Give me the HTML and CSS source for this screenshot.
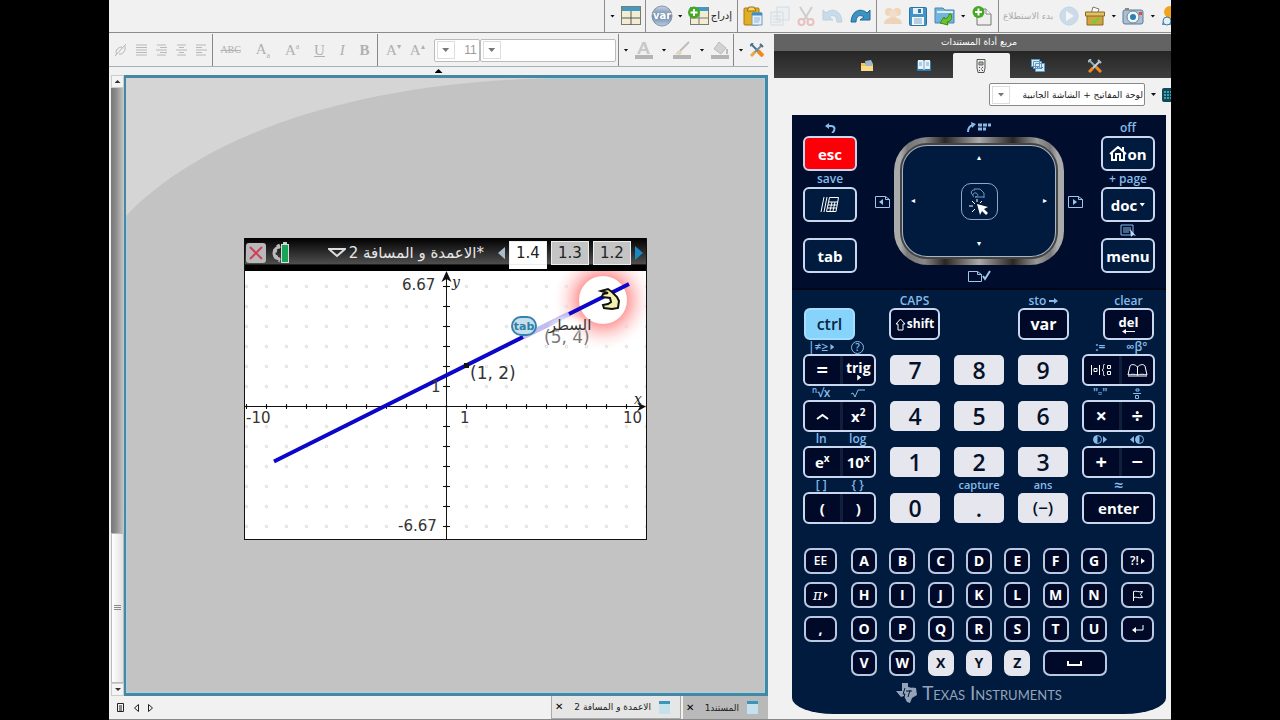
FILE: index.html
```html
<!DOCTYPE html>
<html lang="ar">
<head>
<meta charset="utf-8">
<title>TI-Nspire</title>
<link rel="stylesheet" href="styles.css">
</head>
<body>
<div class="window">
  <header class="topbar">
    <div class="group g-view">
      <button class="tool" aria-label="تخطيط"><i class="caret"></i>
        <svg width="20" height="20" viewBox="0 0 20 20"><rect x=".5" y=".5" width="19" height="18" fill="#f3ecd2" stroke="#7b7b6c"/><rect x="1" y="1" width="18" height="4" fill="#3e9bc4"/><path d="M10 5v14M1 12h18" stroke="#4f5a5c"/></svg></button>
    </div>
    <div class="group g-insert">
      <button class="tool" aria-label="متغير">
        <svg width="22" height="22" viewBox="0 0 22 22"><defs><linearGradient id="vg" x2="0" y2="1"><stop stop-color="#c4d4e4"/><stop offset=".5" stop-color="#6b88a8"/><stop offset="1" stop-color="#b8cfe4"/></linearGradient></defs><circle cx="11" cy="11" r="10" fill="url(#vg)" stroke="#8795a5"/><text x="11" y="14" class="ico-var">var</text></svg></button>
      <button class="tool" dir="rtl"><span>إدراج</span>
        <svg width="21" height="20" viewBox="0 0 21 20"><rect x="2.500" y="1.500" width="18" height="17" fill="#f3ecd2" stroke="#7b7b6c"/><rect x="3" y="1" width="17" height="4" fill="#3e9bc4"/><path d="M11 5v14M3 12h17" stroke="#777"/><circle cx="6" cy="6.500" r="6" fill="#43a824"/><path d="M6 3v7M2.500 6.500h7" stroke="#fff" stroke-width="2"/></svg><i class="caret"></i></button>
    </div>
    <div class="group g-edit">
      <button class="tool" aria-label="لصق"><svg width="20" height="20" viewBox="0 0 20 20"><rect x="1" y="2" width="15" height="17" rx="1" fill="#e2ae22" stroke="#a87810"/><path d="M4 5l2-4h5l2 4z" fill="#f7d76a" stroke="#9a7012"/><path d="M9 7h10v12H9z" fill="#e7f0fa" stroke="#6d9cc4"/><path d="M9 8h10" stroke="#418fc4" stroke-width="3"/><path d="M11 12h6M11 14h6M11 16h5" stroke="#8cb4d6"/></svg></button>
      <button class="tool off" aria-label="نسخ"><svg width="20" height="20" viewBox="0 0 20 20"><path d="M7 1h12v13H7zM1 6h12v13H1z" fill="#e8eff5" stroke="#9ab4c8"/><path d="M3 10h8M3 13h8M3 16h8" stroke="#9ab4c8"/></svg></button>
      <button class="tool off" aria-label="قص"><svg width="18" height="20" viewBox="0 0 18 20"><path d="M3 1l8 13M15 1L7 14" stroke="#8d8d8d" stroke-width="2"/><circle cx="4.500" cy="16" r="3" fill="none" stroke="#d66" stroke-width="2"/><circle cx="13.500" cy="16" r="3" fill="none" stroke="#d66" stroke-width="2"/></svg></button>
      <button class="tool off" aria-label="تراجع"><svg width="21" height="16" viewBox="0 0 21 16"><path d="M1 2l3 3c5-5 15-4 16 9h-5c0-6-4-8-8-5l4 3H1z" fill="#7eb4d8" stroke="#5a92ba"/></svg></button>
      <button class="tool" aria-label="إعادة"><svg width="21" height="16" viewBox="0 0 21 16"><path d="M20 2l-3 3C12 0 2 1 1 14h5c0-6 4-8 8-5l-4 3h10z" fill="#3b93c4" stroke="#226a94"/></svg></button>
    </div>
    <div class="group g-file">
      <button class="tool off" aria-label="الصف"><svg width="20" height="20" viewBox="0 0 20 20"><circle cx="6" cy="6" r="4" fill="#e7a65a"/><circle cx="14" cy="6" r="4" fill="#e7a65a"/><circle cx="10" cy="8" r="4" fill="#f0bd7d"/><path d="M1 18c0-9 18-9 18 0z" fill="#e8a052"/></svg></button>
      <button class="tool" aria-label="حفظ"><svg width="18" height="19" viewBox="0 0 18 19"><rect x=".5" y=".5" width="17" height="18" rx="1" fill="#4294c8" stroke="#2c73a4"/><path d="M4 1h10v6H4z" fill="#e4f0f8"/><path d="M9 2h3v4H9z" fill="#3376a6"/><path d="M3 10h12v8H3z" fill="#f4f8fb"/><path d="M5 12h8M5 14h8M5 16h8" stroke="#7ba7c8"/></svg></button>
      <button class="tool" aria-label="فتح"><svg width="21" height="20" viewBox="0 0 21 20"><path d="M1 2h8l2 2h9v13H1z" fill="#72b4dc" stroke="#4687b0"/><path d="M3 6h16" stroke="#d8edf8" stroke-width="2"/><path d="M17 8c2 5-1 8-4 8l1 3-8-2 4-6 1 2c3-1 4-3 4-5z" fill="#69c52c" stroke="#3c8a16"/></svg><i class="caret"></i></button>
      <button class="tool" aria-label="جديد"><svg width="20" height="20" viewBox="0 0 20 20"><path d="M5 3h9l5 5v11H5z" fill="#eee" stroke="#777"/><path d="M14 3v5h5" fill="#fff" stroke="#888"/><circle cx="6.500" cy="6" r="6" fill="#43a824"/><path d="M6.500 2.500v7M3 6h7" stroke="#fff" stroke-width="2"/></svg></button>
    </div>
    <div class="group g-poll">
      <button class="tool off" dir="rtl"><svg width="20" height="20" viewBox="0 0 20 20"><circle cx="10" cy="10" r="9" fill="#86b4dc" stroke="#6d9cc4"/><path d="M7 5l8 5-8 5z" fill="#fff"/></svg><span>بدء الاستطلاع</span></button>
      <button class="tool" aria-label="تصويت"><svg width="20" height="20" viewBox="0 0 20 20"><path d="M6 8l2-7 6 2-2 6z" fill="#fff" stroke="#777"/><path d="M2 9h16v10H2z" fill="#cfa541" stroke="#8a6a1e"/><path d="M0.500 6h19v4h-19z" fill="#e1c06a" stroke="#8a6a1e"/><path d="M7 14l2 3 5-5" stroke="#6ed038" stroke-width="2" fill="none"/></svg><i class="caret"></i></button>
      <button class="tool" aria-label="التقاط"><svg width="22" height="18" viewBox="0 0 22 18"><rect x="1" y="3" width="20" height="14" rx="2" fill="#a9c0d4" stroke="#5f7c94"/><path d="M3 3V1h4v2" fill="#888"/><circle cx="11" cy="10" r="6" fill="#f2f6f9" stroke="#6b8598"/><circle cx="11" cy="10" r="3" fill="#2c7fb5"/><rect x="17" y="5" width="3" height="3" fill="#e14d3c"/></svg><i class="caret"></i></button>
      <button class="tool" aria-label="المستخدم"><svg width="22" height="20" viewBox="0 0 22 20"><circle cx="9" cy="6" r="6" fill="#f1a31c"/><path d="M1 19c0-9 18-9 18 0z" fill="#5594c4"/><circle cx="6" cy="15" r="4" fill="#e4eef6" stroke="#3c78a4"/></svg></button>
    </div>
  </header>

  <div class="main">
    <section class="doc-area">
      <div class="format">
        <div class="fgroup f-para">
          <button class="tool" aria-label="رابط"><svg width="13" height="14" viewBox="0 0 13 14"><path d="M1 13L12 1M3 11c-3-4 2-7 5-7M5 11c4 1 7-4 6-8" fill="none" stroke="#a5a5a5"/></svg></button>
          <button class="tool" aria-label="ضبط"><svg width="11" height="12" viewBox="0 0 11 12"><path d="M0 1h11M0 3.500h11M0 6h11M0 8.500h11M0 11h11" stroke="#aaa"/></svg></button>
          <button class="tool" aria-label="يمين"><svg width="11" height="12" viewBox="0 0 11 12"><path d="M1 1h9M4 3.500h7M0 6h11M4 8.500h7M1 11h9" stroke="#aaa"/></svg></button>
          <button class="tool" aria-label="وسط"><svg width="11" height="12" viewBox="0 0 11 12"><path d="M1 1h9M3 3.500h5M0 6h11M3 8.500h5M1 11h9" stroke="#aaa"/></svg></button>
          <button class="tool" aria-label="يسار"><svg width="11" height="12" viewBox="0 0 11 12"><path d="M0 1h10M0 3.500h6M0 6h11M0 8.500h6M0 11h10" stroke="#aaa"/></svg></button>
        </div>
        <div class="fgroup f-style">
          <button class="tool serif small"><s>ABC</s></button>
          <button class="tool serif">A<sub>a</sub></button>
          <button class="tool serif">A<sup>a</sup></button>
          <button class="tool serif"><u>U</u></button>
          <button class="tool serif"><em>I</em></button>
          <button class="tool serif"><b>B</b></button>
        </div>
        <div class="fgroup f-font">
          <button class="tool serif" aria-label="تصغير الخط">A<sup>▾</sup></button>
          <button class="tool serif" aria-label="تكبير الخط">A<sup>▴</sup></button>
          <div class="combos">
            <label class="combo size"><span class="drop"></span><select aria-label="حجم الخط" dir="rtl"><option>11</option></select></label>
            <label class="combo face"><span class="drop"></span><select aria-label="الخط" dir="rtl"><option></option></select></label>
          </div>
        </div>
        <div class="fgroup f-color">
          <button class="tool" aria-label="لون النص"><i class="caret"></i><svg width="18" height="18" viewBox="0 0 18 18"><path d="M2 13L7.500 1h3L15 13h-3l-1-3H6l-1 3zM7 8h3L8.500 4z" fill="#c9c9c9"/><rect y="14" width="18" height="4" fill="#b4b4b4"/></svg></button>
          <button class="tool" aria-label="تمييز"><i class="caret"></i><svg width="18" height="18" viewBox="0 0 18 18"><path d="M16 1L7 10" stroke="#bdbdbd" stroke-width="2"/><path d="M2 13l4-4 3 3-2 2z" fill="#e0d6b8"/><rect y="14" width="18" height="4" fill="#b4b4b4"/></svg></button>
          <button class="tool" aria-label="تعبئة"><i class="caret"></i><svg width="18" height="18" viewBox="0 0 18 18"><path d="M8 1l7 6-5 6-7-5z" fill="#d2d2d2" stroke="#bbb"/><path d="M16 8v5" stroke="#bbb" stroke-width="2"/><rect y="14" width="18" height="4" fill="#b4b4b4"/></svg></button>
        </div>
        <div class="fgroup f-tools">
          <button class="tool" aria-label="أدوات"><i class="caret"></i><svg width="14" height="14" viewBox="0 0 14 14"><path d="M2 2l7 7" stroke="#4e6f88" stroke-width="2"/><path d="M12 2L2 12" stroke="#6d8ea6" stroke-width="2"/><path d="M8 8l5 5" stroke="#f08a1c" stroke-width="4"/><path d="M5 9l-4 4" stroke="#e8a93c" stroke-width="3"/><path d="M0 3l3-3M10 1l3 3" stroke="#4e6f88" stroke-width="2"/></svg></button>
        </div>
      </div>
      <div class="collapse"><i></i></div>

      <div class="work">
        <div class="scroll">
          <button class="sb up" aria-label="أعلى"></button>
          <div class="track"></div>
          <div class="thumb"><i></i></div>
          <button class="sb down" aria-label="أسفل"></button>
        </div>
        <div class="stage">
          <svg class="swoosh" width="430" height="138" viewBox="0 0 430 138"><path d="M0 138C60 75 190 5 430 0H0z" fill="#d5d5d5"/></svg>
          <article class="handheld">
            <div class="hh-bar">
              <button class="hh-close" aria-label="إغلاق"><svg width="20" height="20" viewBox="0 0 20 20"><rect width="20" height="20" rx="3" fill="#b9b9b9"/><path d="M4 4l12 12M16 4L4 16" stroke="#d0405a" stroke-width="2"/></svg></button>
              <svg class="hh-gear" width="21" height="22" viewBox="0 0 21 22"><path d="M10 5a6 6 0 0 0 0 12" fill="none" stroke="#bbb" stroke-width="3"/><path d="M10 3.500a8 8 0 0 0 0 15" fill="none" stroke="#bbb" stroke-width="4" stroke-dasharray="3 3"/><rect x="11.500" y="2.500" width="7" height="18" fill="#19a558" stroke="#ddd"/><path d="M13 1h4" stroke="#ccc" stroke-width="2"/></svg>
              <div class="hh-title" dir="rtl"><span>*الاعمدة و المسافة 2</span><svg width="18" height="10" viewBox="0 0 18 10"><path d="M1 1h16L9 8z" fill="none" stroke="#ddd" stroke-width="2"/></svg></div>
              <nav class="hh-tabs">
                <svg width="7" height="14" viewBox="0 0 8 14"><path d="M8 0v14L0 7z" fill="#a9bccb"/></svg>
                <button class="hh-tab on">1.4</button><button class="hh-tab">1.3</button><button class="hh-tab">1.2</button>
                <svg width="8" height="14" viewBox="0 0 8 14"><path d="M0 0v14l8-7z" fill="#1987c0"/></svg>
              </nav>
            </div>
            <svg class="plot" viewBox="0 0 401 268" role="img" aria-label="y = 0.5x + 1.5">
              <defs>
                <pattern id="dots" x="-9" y="5" width="20" height="20" patternUnits="userSpaceOnUse"><circle cx="10.500" cy="10.500" r="1.200" fill="none" stroke="#d2d2d2"/></pattern>
                <radialGradient id="glow"><stop offset=".45" stop-color="#ff9c9c"/><stop offset=".6" stop-color="#ffbcbc" stop-opacity=".8"/><stop offset="1" stop-color="#fff" stop-opacity="0"/></radialGradient>
                <radialGradient id="mist"><stop offset=".3" stop-color="#fff"/><stop offset="1" stop-color="#fff" stop-opacity="0"/></radialGradient>
              </defs>
              <rect width="401" height="268" fill="#fff"/>
              <rect width="401" height="268" fill="url(#dots)"/>
              <circle cx="358" cy="29" r="52" fill="url(#glow)"/>
              <circle cx="358" cy="29" r="24" fill="#fff"/>
              <path d="M201.500 2v266M0 135.500h400" stroke="#111"/>
              <path d="M201.500 15v242" stroke="#111" stroke-width="7" stroke-dasharray="1 19"/>
              <path d="M1 135.500h382" stroke="#111" stroke-width="5" stroke-dasharray="1 19"/>
              <path d="M201.500 0l5 11-5-3-5 3zM401 135.500l-9 5 3-5-3-4z" fill="#111"/>
              <path d="M29 190.500L384 13" stroke="#0b06c8" stroke-width="4"/>
              <path d="M278 66L324 43" stroke="#c1bdf2" stroke-width="5"/>
              <path d="M219 92h5v5h-5z" fill="#111"/>
              <text x="157" y="19" class="num">6.67</text>
              <text x="153" y="260" class="num">-6.67</text>
              <text x="1" y="152" class="num">-10</text>
              <text x="215" y="152" class="num">1</text>
              <text x="378" y="152" class="num">10</text>
              <text x="186" y="121" class="num">1</text>
              <text x="207" y="16" class="axis">y</text>
              <text x="389" y="133" class="axis">x</text>
              <text x="225" y="108" class="pt">(1, 2)</text>
              <text x="299" y="72" class="pt faint">(5, 4)</text>
              <ellipse cx="325" cy="54" rx="22" ry="10" fill="url(#mist)"/>
              <text x="325" y="59" class="pt ar">السطر</text>
              <rect x="267" y="46" width="24" height="18" rx="9" fill="#c6dfec" stroke="#3682ab" stroke-width="2"/>
              <text x="279" y="59" class="tabkey">tab</text>
              <path d="M356 20l7-2 4 3 5 5 2 4-1 7-6 1-8-1-1-3 5-1 3-2-1-4-8-1 1-3 5-1z" fill="#f5efb0" stroke="#111" stroke-width="2"/>
            </svg>
          </article>
        </div>
      </div>

      <footer class="doc-tabs">
        <button class="tool" aria-label="قائمة"><svg width="8" height="9" viewBox="0 0 8 9"><path d="M.5.5h6v8h-6zM2 3h3M2 5h3M2 7h3" fill="none" stroke="#222"/></svg></button>
        <button class="tool" aria-label="السابق"><svg width="5" height="8" viewBox="0 0 5 8"><path d="M4.500.5v7L.5 4z" fill="none" stroke="#222"/></svg></button>
        <button class="tool" aria-label="التالي"><svg width="5" height="8" viewBox="0 0 5 8"><path d="M.5.5v7L4.500 4z" fill="none" stroke="#222"/></svg></button>
        <div class="dtabs">
          <div class="dtab current" dir="rtl"><svg width="11" height="13" viewBox="0 0 11 13"><rect width="11" height="13" fill="#c5e1ee"/><rect width="11" height="3" fill="#3a95b8"/></svg><span>الاعمدة و المسافة 2</span><button class="x" aria-label="إغلاق">✕</button></div>
          <div class="dtab" dir="rtl"><svg width="11" height="13" viewBox="0 0 11 13"><rect width="11" height="13" fill="#c5e1ee"/><rect width="11" height="3" fill="#3a95b8"/></svg><span>المستند1</span><button class="x" aria-label="إغلاق">✕</button></div>
        </div>
      </footer>
    </section>

    <aside class="panel">
      <div class="panel-in">
        <h1 class="panel-title">مربع أداة المستندات</h1>
        <nav class="ptabs">
          <button class="ptab" aria-label="المحتوى"><svg width="14" height="13" viewBox="0 0 14 13"><path d="M1 4h4l1 1h7v7H1z" fill="#f4c553"/><path d="M5 2l6-1 2 4-2 3H6z" fill="#9db8cc"/><path d="M1 7h12v5H1z" fill="#f9dc86"/></svg></button>
          <button class="ptab" aria-label="الأدوات"><svg width="14" height="12" viewBox="0 0 14 12"><path d="M0 1h14v10H0z" fill="#2f7cb4"/><path d="M1 0h5l1 1 1-1h5v9H8l-1 1-1-1H1z" fill="#e7f1f8"/><path d="M7 1v8M2 3h3M2 5h3M9 3h3M9 5h3" stroke="#7fa9c7"/></svg></button>
          <button class="ptab on" aria-label="لوحة المفاتيح"><svg width="10" height="14" viewBox="0 0 10 14"><path d="M1 .5h8V9L8 13.500H2L1 9z" fill="#eee" stroke="#555"/><path d="M3 3h4v3H3z" fill="#9ac38f" stroke="#666"/><path d="M3 8l1 1M7 8L6 9M5 10h1M3 12l1-1M7 12l-1-1" stroke="#444"/></svg></button>
          <button class="ptab" aria-label="الصفحات"><svg width="14" height="13" viewBox="0 0 14 13"><path d="M.5.5h8v7h-8zM2.500 2.500h8v7h-8zM4.500 4.500h9v8h-9z" fill="#dcecf7" stroke="#5c9ac4"/><path d="M6 9c2-4 3 3 6-1" fill="none" stroke="#277cb4"/></svg></button>
          <button class="ptab" aria-label="الإعدادات"><svg width="14" height="14" viewBox="0 0 14 14"><path d="M2 2l7 7" stroke="#8faabc" stroke-width="2"/><path d="M12 2L2 12" stroke="#c4d3de" stroke-width="2"/><path d="M8 8l5 5M5 9l-4 4" stroke="#f08a1c" stroke-width="3"/><path d="M0 3l3-3M10 1l3 3" stroke="#aebfcb" stroke-width="2"/></svg></button>
        </nav>
        <div class="viewrow">
          <label class="combo view"><span class="drop"></span><select aria-label="العرض" dir="rtl"><option>لوحة المفاتيح + الشاشة الجانبية</option></select></label>
          <button class="tool" aria-label="خيارات"><i class="caret"></i><svg width="20" height="14" viewBox="0 0 20 14"><rect width="20" height="14" rx="2" fill="#124a58"/><path d="M2 4h16M2 7h16M2 10h16" stroke="#3ba4b8" stroke-width="2" stroke-dasharray="2 1"/></svg></button>
        </div>

        <div class="keypad" dir="ltr">
          <div class="kp-top">
            <div class="kcol">
              <span class="hint"><svg width="11" height="10" viewBox="0 0 11 10"><path d="M1 3h5c5 0 4 5 1 7" fill="none" stroke="#86baea" stroke-width="2"/><path d="M4 0v6L0 3z" fill="#86baea"/></svg></span>
              <button class="key esc">esc</button>
              <span class="hint">save</span>
              <button class="key" aria-label="scratchpad"><svg width="20" height="17" viewBox="0 0 20 17"><path d="M4 1L1 16M7 1L4 16M9.500 1.500h9L16 15.500H6.500zM9 6h9M8 9h9M7.500 12h9M12 6l-2 9M15 6l-2 9" fill="none" stroke="#fff"/></svg></button>
              <span class="hint"></span>
              <button class="key">tab</button>
            </div>
            <div class="nav">
              <svg class="n-top" width="24" height="11" viewBox="0 0 24 11"><path d="M1 10c0-4 1-6 5-7" fill="none" stroke="#86baea" stroke-width="2"/><path d="M4 0l5 2-4 4z" fill="#86baea"/><path d="M11 3h13M11 7h8" stroke="#86baea" stroke-width="3" stroke-dasharray="4 1"/></svg>
              <svg class="n-left" width="15" height="13" viewBox="0 0 15 13"><path d="M.5 1.500h10l4 3v8H.5zM10.500 1.500v3h4" fill="none" stroke="#9cc6ea"/><path d="M8 4v6L4 7z" fill="#9cc6ea"/></svg>
              <div class="pad"><div class="pad-in">
                <button class="arr a-up" aria-label="up">▴</button>
                <button class="arr a-left" aria-label="left">◂</button>
                <button class="click" aria-label="click"><svg width="20" height="30" viewBox="0 0 20 30"><path d="M5 3h6l4 4v5M4 9c-3-1-2-6 2-5M5 11c-2-1-1-5 2-4s2 4-1 4h9" fill="none" stroke="#6f9cca"/><path d="M8 18l3 11 2-4 4 4 2-2-4-4 4-2z" fill="#fff"/><path d="M3 15l3 3M8 13v3M0 20h4M3 26l3-3M13 15l-2 2" stroke="#fff"/></svg></button>
                <button class="arr a-right" aria-label="right">▸</button>
                <button class="arr a-down" aria-label="down">▾</button>
              </div></div>
              <svg class="n-right" width="15" height="13" viewBox="0 0 15 13"><path d="M.5 1.500h10l4 3v8H.5zM10.500 1.500v3h4" fill="none" stroke="#9cc6ea"/><path d="M5 4v6l4-3z" fill="#9cc6ea"/></svg>
              <svg class="n-bottom" width="24" height="12" viewBox="0 0 24 12"><path d="M1.500 1.500h9l4 3v7h-13zM10.500 1.500v3h4" fill="none" stroke="#9cc6ea"/><path d="M16 6l2 3 5-8" fill="none" stroke="#9cc6ea" stroke-width="2"/></svg>
            </div>
            <div class="kcol">
              <span class="hint">off</span>
              <button class="key"><svg width="18" height="15" viewBox="0 0 18 15"><path d="M1 8l8-7 8 7M3 7v7h4V8h4v6h4V7M14 5V1" fill="none" stroke="#fff" stroke-width="2"/></svg>on</button>
              <span class="hint">+ page</span>
              <button class="key">doc<i class="tri down-tri"></i></button>
              <span class="hint"><svg width="16" height="13" viewBox="0 0 16 13"><path d="M1 1h12v10H1zM3 4h8M3 6h8M3 8h6" fill="none" stroke="#86baea"/><path d="M10 5l1 8 2-2 3 1z" fill="#b6dcfa"/></svg></span>
              <button class="key">menu</button>
            </div>
          </div>

          <div class="kp-main">
            <div class="row-mod">
              <span class="hint"></span><span class="hint">CAPS</span><span></span><span class="hint">sto<svg width="9" height="6" viewBox="0 0 9 6"><path d="M0 3h6" stroke="#86baea" stroke-width="2"/><path d="M5 0v6l4-3z" fill="#86baea"/></svg></span><span class="hint">clear</span>
              <button class="key ctrl">ctrl</button>
              <button class="key sm"><svg width="11" height="13" viewBox="0 0 11 13"><path d="M5.500 1L10 6H8v6H3V6H1z" fill="none" stroke="#fff"/></svg>shift</button>
              <span></span>
              <button class="key">var</button>
              <button class="key del">del<svg width="13" height="5" viewBox="0 0 13 5"><path d="M0 2.500L4 0v2h9v1H4v2z" fill="#fff"/></svg></button>
            </div>
            <div class="row-num">
              <span class="hints"><i class="rel">|≠≥<b class="tri"></b></i><i><svg width="13" height="13" viewBox="0 0 13 13"><circle cx="6.500" cy="6.500" r="6" fill="none" stroke="#86baea"/><text x="6.500" y="10" class="q">?</text></svg></i></span><span></span><span></span><span></span><span class="hints"><i>:=</i><i>∞β°</i></span>
              <div class="pair"><button class="eq">=</button><button class="trig">trig<i class="tri"></i></button></div>
              <button class="num-key">7</button><button class="num-key">8</button><button class="num-key">9</button>
              <div class="pair"><button aria-label="templates"><svg width="20" height="12" viewBox="0 0 20 12"><path d="M.5 1v10M8.500 1v10M3 4.500h3v3H3zM14 0c-3 0 0 5-3 6 3 1 0 6 3 6M16.500 1.500h3v3h-3zM16.500 7.500h3v3h-3z" fill="none" stroke="#fff"/></svg></button><button aria-label="catalog"><svg width="21" height="13" viewBox="0 0 21 13"><path d="M10.500 3C8 0 4 0 3 2L1 11c3-1 7-1 9.500 0 2.500-1 6.500-1 9.500 0L18 2c-1-2-5-2-7.500 1v8M1 12h19" fill="none" stroke="#fff"/></svg></button></div>

              <span class="hints"><i><sup>n</sup>√x</i><i><svg width="14" height="9" viewBox="0 0 14 9"><path d="M0 5l2-1 2 4 3-7h7" fill="none" stroke="#86baea"/></svg></i></span><span></span><span></span><span></span><span class="hints"><i>"▫"</i><i><svg width="8" height="11" viewBox="0 0 8 11"><path d="M0 5.500h8" stroke="#86baea"/><path d="M3 1h3v2H3zM2.500 7.500h3v3h-3z" fill="none" stroke="#86baea"/></svg></i></span>
              <div class="pair"><button aria-label="^"><svg width="13" height="7" viewBox="0 0 13 7"><path d="M1 6l5.500-4L12 6" fill="none" stroke="#fff" stroke-width="2"/></svg></button><button>x<sup>2</sup></button></div>
              <button class="num-key">4</button><button class="num-key">5</button><button class="num-key">6</button>
              <div class="pair op"><button>×</button><button>÷</button></div>

              <span class="hints"><i>ln</i><i>log</i></span><span></span><span></span><span></span><span class="hints"><i><svg width="14" height="9" viewBox="0 0 14 9"><circle cx="4.500" cy="4.500" r="4" fill="none" stroke="#86baea"/><path d="M4.500.5a4 4 0 0 0 0 8zM10 1v7l4-3.500z" fill="#86baea"/></svg></i><i><svg width="14" height="9" viewBox="0 0 14 9"><circle cx="9.500" cy="4.500" r="4" fill="none" stroke="#86baea"/><path d="M9.500.5a4 4 0 0 0 0 8zM4 1v7L0 4.500z" fill="#86baea"/></svg></i></span>
              <div class="pair"><button>e<sup>x</sup></button><button>10<sup>x</sup></button></div>
              <button class="num-key">1</button><button class="num-key">2</button><button class="num-key">3</button>
              <div class="pair op"><button>+</button><button>−</button></div>

              <span class="hints"><i>[ ]</i><i>{ }</i></span><span></span><span class="hint mini">capture</span><span class="hint mini">ans</span><span class="hint approx">≈</span>
              <div class="pair"><button>(</button><button>)</button></div>
              <button class="num-key">0</button><button class="num-key">.</button><button class="num-key neg">(−)</button>
              <button class="key enter">enter</button>
            </div>

            <div class="alpha">
              <div class="side"><button class="ak light">EE</button><button class="ak pi">π<i class="tri"></i></button><button class="ak">,</button></div>
              <div class="letters">
                <button class="ak">A</button><button class="ak">B</button><button class="ak">C</button><button class="ak">D</button><button class="ak">E</button><button class="ak">F</button><button class="ak">G</button>
                <button class="ak">H</button><button class="ak">I</button><button class="ak">J</button><button class="ak">K</button><button class="ak">L</button><button class="ak">M</button><button class="ak">N</button>
                <button class="ak">O</button><button class="ak">P</button><button class="ak">Q</button><button class="ak">R</button><button class="ak">S</button><button class="ak">T</button><button class="ak">U</button>
                <button class="ak">V</button><button class="ak">W</button><button class="ak inv">X</button><button class="ak inv">Y</button><button class="ak inv">Z</button>
                <button class="ak space" aria-label="space"><svg width="15" height="5" viewBox="0 0 15 5"><path d="M1 0v4h13V0" fill="none" stroke="#fff" stroke-width="2"/></svg></button>
              </div>
              <div class="side"><button class="ak light">?!<i class="tri"></i></button><button class="ak" aria-label="flag"><svg width="12" height="11" viewBox="0 0 12 11"><path d="M1.500 11V1.500c3-1 5 1 9 0l-2 3 2 3c-4 1-6-1-9 0" fill="none" stroke="#fff"/></svg></button><button class="ak" aria-label="return"><svg width="12" height="8" viewBox="0 0 12 8"><path d="M11 0v5H3" fill="none" stroke="#fff"/><path d="M0 5l4-3v6z" fill="#fff"/></svg></button></div>
            </div>
            <div class="brand">
              <svg width="21" height="20" viewBox="0 0 21 20"><path d="M6 0h6v4l8 1 1 7-5 3-2 5-3-1-3-6-3 1-5-6h6z" fill="#94a3b8"/><path d="M9 5l-2 6h2l-1 3M14 7l-2 7M10 8h6M15 4v1" fill="none" stroke="#001b3e"/></svg>
              <span>Texas Instruments</span>
            </div>
          </div>
        </div>
      </div>
    </aside>
  </div>
</div>
</body>
</html>
```
FILE: styles.css
```css
* { box-sizing: border-box; }
body { margin: 0; padding: 0 109px; background: #000; font: 10px/14px "DejaVu Sans", sans-serif; color: #222; }
button, select { font: inherit; color: inherit; margin: 0; padding: 0; border: 0; background: none; }
svg { display: block; flex: none; }
.window { min-height: 100vh; background: #f1f1f1; display: flex; flex-direction: column; overflow: hidden; border-bottom: 1px solid #888; }

.caret { width: 5px; height: 3px; background: #111; clip-path: polygon(0 0, 100% 0, 50% 100%); flex: none; }
.tool { display: flex; align-items: center; justify-content: center; gap: 6px; white-space: nowrap; }
.off { opacity: .35; }

/* top toolbar */
.topbar { height: 33px; display: flex; justify-content: flex-end; border-bottom: 1px solid #8c8c8c; }
.group { display: flex; align-items: center; justify-content: space-between; border-left: 1px solid #8c8c8c; padding: 0 5px; flex: none; }
.g-view { width: 41px; }
.g-insert { width: 92px; }
.g-insert .tool { gap: 2px; }
.g-insert .caret { margin-right: 3px; }
.g-edit { width: 139px; }
.g-file { width: 122px; padding: 0 6px; }
.g-poll { width: 173px; padding: 0 0 0 4px; gap: 6px; justify-content: flex-start; font-size: 9px; }
.ico-var { font: bold 10px "DejaVu Sans", sans-serif; fill: #fff; text-anchor: middle; }

.main { flex: 1; display: grid; grid-template-columns: minmax(0, 1fr) 397px; column-gap: 6px; }
.doc-area { display: flex; flex-direction: column; min-width: 0; }

/* formatting toolbar */
.format { height: 34px; display: flex; padding-top: 1px; border-bottom: 1px solid #a5b0b8; }
.fgroup { display: flex; align-items: center; justify-content: space-around; border-right: 1px solid #888; }
.f-para { width: 104px; }
.f-para svg { opacity: .8; }
.f-style { width: 165px; }
.f-font { flex: 1; padding: 0 2px 0 8px; gap: 9px; }
.f-color { width: 115px; }
.f-tools { width: 34px; border-right: 0; }
.serif { font: 15px/18px "Liberation Serif", serif; color: #b0b0b0; display: block; }
.serif sub, .serif sup { font-size: 8px; line-height: 8px; }
.small { font-size: 10px; }
.combos { flex: 1; display: flex; }
.combo { display: flex; align-items: center; height: 23px; padding: 2px; background: #fff; border: 1px solid #bbb; border-radius: 2px; color: #999; }
.combo select { appearance: none; flex: 1; min-width: 0; height: 100%; outline: 0; }
.size { width: 46px; font-family: "Liberation Sans", sans-serif; font-size: 12px; }
.face { flex: 1; }
.drop { width: 18px; height: 18px; border: 1px solid #ddd; display: grid; place-items: center; flex: none; }
.drop::after { content: ""; width: 7px; height: 4px; background: #777; clip-path: polygon(0 0, 100% 0, 50% 100%); }
.collapse { height: 8px; display: grid; place-items: center; }
.collapse i { width: 8px; height: 4px; background: #000; clip-path: polygon(50% 0, 100% 100%, 0 100%); }

/* document workspace */
.work { flex: 1; display: flex; padding-left: 2px; }
.scroll { width: 13px; display: flex; flex-direction: column; }
.sb { height: 13px; background: #f4f4f4; border: 1px solid #ccc; display: grid; place-items: center; }
.sb::after { content: ""; width: 6px; height: 3px; background: #333; clip-path: polygon(50% 0, 100% 100%, 0 100%); }
.down::after { transform: rotate(180deg); }
.track { flex: 3; background: linear-gradient(90deg, #777, #8d8d8d 40%, #c9c9c9); }
.thumb { flex: 1; background: linear-gradient(90deg, #fff, #e2e2e2); border: 1px solid #bbb; display: grid; place-items: center; }
.thumb i { width: 7px; height: 6px; background: repeating-linear-gradient(#888 0 1px, transparent 1px 2px); }
.stage { position: relative; flex: 1; display: flex; align-items: center; justify-content: center; padding-top: 7px; background: #c3c3c3; border: 3px solid #4489a4; border-left-width: 2px; box-shadow: inset 0 0 0 1px #a6d2e4; }
.swoosh { position: absolute; top: 0; left: 0; }
.handheld { position: relative; width: 403px; max-width: 100%; border: 1px solid #111; border-top: 0; background: #000; }
.hh-bar { display: flex; align-items: center; height: 33px; padding: 0 3px 3px 1px; background: linear-gradient(#000, #4e4e4e 78%, #000 82%); color: #e8e8e8; }
.hh-gear { margin-left: 4px; }
.hh-title { flex: 1; display: flex; align-items: center; gap: 3px; font-size: 15px; line-height: 18px; padding-right: 14px; white-space: nowrap; }
.hh-tabs { display: flex; align-items: center; gap: 4px; }
.hh-tab { width: 38px; height: 24px; background: #c4c4c4; border: 1px solid #eee; color: #222; font-size: 15px; }
.hh-tab.on { background: #fff; box-shadow: 0 4px #fff; }
.plot { width: 100%; height: auto; }
.num { font: 15px "DejaVu Sans", sans-serif; fill: #333; }
.axis { font: italic 14px "DejaVu Serif", serif; fill: #222; }
.pt { font: 17px "DejaVu Sans", sans-serif; fill: #333; }
.faint { fill: #777; }
.ar { font-size: 15px; text-anchor: middle; }
.tabkey { font: bold 11px "DejaVu Sans", sans-serif; fill: #2f7ea8; text-anchor: middle; }

/* document tabs */
.doc-tabs { height: 23px; display: flex; align-items: stretch; padding-left: 8px; gap: 9px; }
.dtabs { display: flex; gap: 2px; margin-left: auto; }
.dtab { display: flex; align-items: center; gap: 8px; width: 85px; padding: 0 10px 0 3px; background: #b9b9b9; font-size: 9px; }
.dtab span { flex: 1; white-space: nowrap; }
.dtab.current { width: 130px; background: #e6e6e6; border: 1px solid #aaa; border-top: 0; }
.x { color: #000; font-size: 10px; }

/* side panel */
.panel { overflow: hidden; }
.panel-in { margin-right: -13px; }
.panel-title { margin: 1px 0 0; height: 17px; font-size: 9px; line-height: 16px; font-weight: 400; text-align: center; color: #fff; background: #636363; }
.ptabs { display: flex; justify-content: center; height: 27px; padding: 2px 0 0 4px; background: linear-gradient(#262626, #3e3e3e); }
.ptab { width: 57px; display: grid; place-items: center; }
.ptab.on { background: #f1f1f1; border-radius: 2px 2px 0 0; }
.viewrow { display: flex; align-items: center; justify-content: flex-end; gap: 6px; height: 33px; padding-right: 2px; margin-bottom: 4px; }
.view { width: 156px; border-color: #888; color: #222; padding-right: 1px; font-size: 9px; }

/* keypad */
.keypad { width: 374px; margin: 0 auto; border-radius: 0 0 42px 42px / 0 0 16px 16px; overflow: hidden; background: #001b3e; color: #fff; font: 600 16px/20px "Open Sans", sans-serif; }
.kp-top { display: grid; grid-template-columns: 54px 1fr 54px; padding: 5px 11px; background: #000d2d; border-bottom: 2px solid #000719; align-items: start; }
.kcol { display: grid; grid-template-rows: repeat(3, 16px 35px); }
.hint { display: flex; align-items: center; justify-content: center; gap: 3px; color: #86baea; font-size: 12px; line-height: 14px; white-space: nowrap; }
.mini { font-size: 11px; }
.approx { font-size: 16px; }
.tri { width: 4px; height: 6px; background: currentColor; clip-path: polygon(0 0, 100% 50%, 0 100%); flex: none; align-self: center; margin-left: 2px; }
.down-tri { width: 6px; height: 4px; clip-path: polygon(0 0, 100% 0, 50% 100%); }
.key { display: flex; align-items: center; justify-content: center; border: 2px solid #c9d8ee; border-radius: 6px; background: #001b3e; font-weight: 700; }
.kcol .key { font-size: 15px; }
.esc { background: #fb0007; }
.nav { display: grid; grid-template-columns: 15px 170px 15px; grid-template-rows: 14px 128px 15px; gap: 3px 4px; justify-content: center; align-items: center; justify-items: center; }
.n-top { grid-area: 1 / 2; }
.n-bottom { grid-area: 3 / 2; }
.n-left { grid-area: 2 / 1; }
.n-right { grid-area: 2 / 3; }
.pad { grid-area: 2 / 2; width: 100%; height: 100%; padding: 7px; border-radius: 34px; background: linear-gradient(90deg, #aaa 0 4%, #777 8%, #888 18%, #2b2623 30%, #aaa 50%, #2b2623 70%, #999 84%, #777 92%, #aaa 96%); }
.pad-in { height: 100%; display: grid; grid-template-columns: 1fr 37px 1fr; grid-template-rows: 1fr 37px 1fr; place-items: center; background: #001b3e; border: 2px solid #a9b4c6; outline: 2px solid #444; outline-offset: -1px; border-radius: 26px; }
.arr { font: 8px/8px "DejaVu Sans", sans-serif; padding: 8px; }
.a-up { grid-area: 1 / 2; align-self: start; }
.a-left { grid-area: 2 / 1; justify-self: start; }
.click { grid-area: 2 / 2; width: 37px; height: 37px; border: 1px solid #8fa6c8; border-radius: 10px; display: grid; place-items: center; }
.a-right { grid-area: 2 / 3; justify-self: end; }
.a-down { grid-area: 3 / 2; align-self: end; }

.kp-main { padding: 4px 11px 11px; }
.row-mod { display: grid; grid-template-columns: 51px 51px 1fr 51px 51px; column-gap: 34px; grid-template-rows: 14px 32px; padding: 0 1px; }
.row-mod .key { background: #000a28; }
.row-mod .ctrl { background: #86d3fb; border-color: #a6dffd; color: #0c2546; font-weight: 600; }
.row-mod .sm { font-size: 12px; gap: 1px; }
.row-mod .del { flex-direction: column; font-size: 13px; line-height: 14px; }
.row-num { display: grid; grid-template-columns: 73px repeat(3, 50px) 73px; justify-content: space-between; grid-template-rows: repeat(4, 14px 32px); }
.hints { display: grid; grid-template-columns: 1fr 1fr; place-items: center; color: #86baea; font-size: 12px; line-height: 14px; }
.hints i { display: flex; font-style: normal; white-space: nowrap; }
.hints sup { font-size: 8px; line-height: 8px; }
.q { font: 600 10px "Open Sans", sans-serif; fill: #86baea; text-anchor: middle; }
.pair { display: grid; grid-template-columns: 1fr 1fr; border: 2px solid #c9d8ee; border-radius: 6px; background: #000a28; overflow: hidden; }
.pair button { display: flex; align-items: center; justify-content: center; font-size: 15px; font-weight: 700; }
.pair button + button { border-left: 3px solid #101f3c; }
.pair sup { font-size: 10px; line-height: 10px; align-self: flex-start; padding-top: 5px; }
.pair .trig { flex-direction: column; font-size: 14px; line-height: 15px; }
.op button, .pair .eq { font-size: 20px; }
.num-key { margin: 1px 0; border-radius: 5px; background: #e6e7ee; color: #051029; font-size: 23px; font-weight: 600; }
.neg { font-size: 17px; }
.enter { background: #000a28; font-size: 15px; }

.alpha { display: grid; grid-template-columns: 33px 1fr 33px; column-gap: 14px; margin-top: 24px; padding: 0 1px; align-items: start; }
.side { display: grid; row-gap: 8px; grid-auto-rows: 26px; }
.letters { display: grid; grid-template-columns: repeat(7, 26px); grid-auto-rows: 26px; row-gap: 8px; justify-content: space-between; }
.ak { display: flex; align-items: center; justify-content: center; border: 2px solid #b9c9e2; border-radius: 7px; background: #000a28; font-size: 14px; font-weight: 700; }
.light { font-size: 12px; font-weight: 600; }
.pi { font-family: "DejaVu Serif", serif; font-style: italic; font-weight: 400; }
.inv { background: #e6e7ee; border-color: #e6e7ee; color: #051029; }
.space { grid-column: span 2; }
.brand { display: flex; align-items: center; justify-content: center; gap: 5px; height: 20px; margin-top: 7px; color: #94a3b8; font: small-caps 19px/20px Lato, sans-serif; }
```
